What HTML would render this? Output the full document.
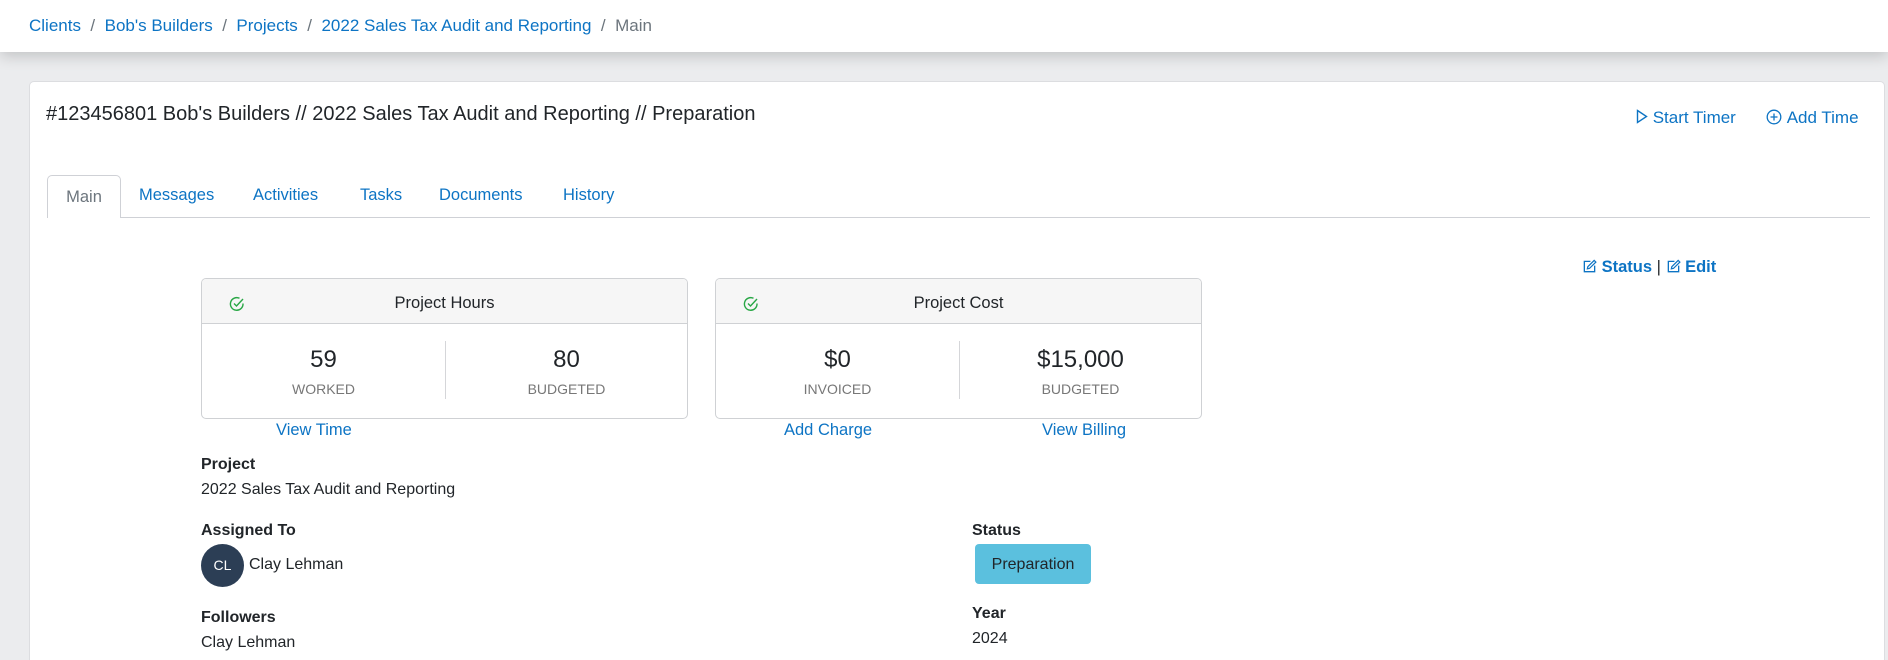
<!DOCTYPE html>
<html><head><meta charset="utf-8"><style>
*{box-sizing:border-box;margin:0;padding:0}
html,body{width:1888px;height:660px;overflow:hidden}
body{background:#ebecee;font-family:"Liberation Sans",sans-serif;color:#212529;font-size:16px;position:relative}
.a{position:absolute;white-space:nowrap}
.blue{color:#0d74c4}
.hdr{position:absolute;left:0;top:0;width:1888px;height:52px;background:#fff;box-shadow:0 4px 14px rgba(0,0,0,.18)}
.card{position:absolute;left:29px;top:81px;width:1856px;height:579px;background:#fff;border:1px solid #dcdde0;border-bottom:none;border-radius:5px 5px 0 0}
.box{position:absolute;top:278px;width:487px;height:141px;border:1px solid #cfd1d4;border-radius:5px;background:#fff;overflow:hidden}
.box .h{height:45px;background:#f6f6f6;border-bottom:1px solid #cfd1d4;text-align:center;line-height:48px;font-size:16.5px}
.box .ck{position:absolute;left:27px;top:17px}
.box .div{position:absolute;left:243px;top:62px;width:1px;height:58px;background:#d5d6d9}
.box .n{position:absolute;width:243px;text-align:center;top:67px;font-size:24px}
.box .l{position:absolute;width:243px;text-align:center;top:102px;font-size:14px;color:#777}
.b{font-weight:bold}
</style></head><body>
<div class="hdr"></div>
<div class="a" style="left:29px;top:16px;font-size:17px"><span class="blue">Clients</span> <span style="color:#6c757d">&nbsp;/&nbsp;</span> <span class="blue">Bob's Builders</span> <span style="color:#6c757d">&nbsp;/&nbsp;</span> <span class="blue">Projects</span> <span style="color:#6c757d">&nbsp;/&nbsp;</span> <span class="blue">2022 Sales Tax Audit and Reporting</span> <span style="color:#6c757d">&nbsp;/&nbsp; Main</span></div>
<div class="card"></div>
<div class="a" style="left:46px;top:103px;font-size:20px">#123456801 Bob's Builders // 2022 Sales Tax Audit and Reporting // Preparation</div>
<div class="a blue" style="left:1636px;top:108px;font-size:17px"><svg width="12" height="15" viewBox="0 0 12 15" style="vertical-align:-1px"><path d="M1.5 1.5 L10.5 7.5 L1.5 13.5 Z" fill="none" stroke="#0d74c4" stroke-width="1.4"/></svg>&nbsp;Start Timer</div>
<div class="a blue" style="left:1766px;top:108px;font-size:17px"><svg width="16" height="16" viewBox="0 0 16 16" style="vertical-align:-2px"><circle cx="8" cy="8" r="6.8" fill="none" stroke="#0d74c4" stroke-width="1.3"/><path d="M8 4.5v7M4.5 8h7" stroke="#0d74c4" stroke-width="1.3"/></svg>&nbsp;Add Time</div>
<div class="a" style="left:47px;top:217px;width:1823px;height:1px;background:#cfd1d6"></div>
<div class="a" style="left:47px;top:175px;width:74px;height:43px;background:#fff;border:1px solid #cfd1d6;border-bottom:none;border-radius:5px 5px 0 0;text-align:center;line-height:42px;color:#6c757d;font-size:16.5px">Main</div>
<div class="a blue" style="left:139px;top:186px;font-size:16.5px">Messages</div>
<div class="a blue" style="left:253px;top:186px;font-size:16.5px">Activities</div>
<div class="a blue" style="left:360px;top:186px;font-size:16.5px">Tasks</div>
<div class="a blue" style="left:439px;top:186px;font-size:16.5px">Documents</div>
<div class="a blue" style="left:563px;top:186px;font-size:16.5px">History</div>
<div class="a" style="left:1582px;top:258px;font-size:16.5px"><svg width="15" height="15" viewBox="0 0 16 16" style="vertical-align:-2px"><path d="M9 2.5H2.5v11h11V7" fill="none" stroke="#0d74c4" stroke-width="1.4"/><path d="M13 1.5l1.8 1.8L8 10l-2.3.5.5-2.3z" fill="none" stroke="#0d74c4" stroke-width="1.3"/></svg> <span class="blue b">Status</span> | <svg width="15" height="15" viewBox="0 0 16 16" style="vertical-align:-2px"><path d="M9 2.5H2.5v11h11V7" fill="none" stroke="#0d74c4" stroke-width="1.4"/><path d="M13 1.5l1.8 1.8L8 10l-2.3.5.5-2.3z" fill="none" stroke="#0d74c4" stroke-width="1.3"/></svg> <span class="blue b">Edit</span></div>

<div class="box" style="left:201px">
<svg class="ck" width="16" height="16" viewBox="0 0 16 16"><path d="M14 7.5A6.3 6.3 0 1 1 10.5 2.3" fill="none" stroke="#28a745" stroke-width="1.4"/><path d="M5 7.5l2.5 2.5L14 3" fill="none" stroke="#28a745" stroke-width="1.4"/></svg>
<div class="h">Project Hours</div><div class="div"></div>
<div class="n" style="left:0">59</div><div class="n" style="left:243px">80</div>
<div class="l" style="left:0">WORKED</div><div class="l" style="left:243px">BUDGETED</div></div>
<div class="box" style="left:715px">
<svg class="ck" width="16" height="16" viewBox="0 0 16 16"><path d="M14 7.5A6.3 6.3 0 1 1 10.5 2.3" fill="none" stroke="#28a745" stroke-width="1.4"/><path d="M5 7.5l2.5 2.5L14 3" fill="none" stroke="#28a745" stroke-width="1.4"/></svg>
<div class="h">Project Cost</div><div class="div"></div>
<div class="n" style="left:0">$0</div><div class="n" style="left:243px">$15,000</div>
<div class="l" style="left:0">INVOICED</div><div class="l" style="left:243px">BUDGETED</div></div>
<div class="a blue" style="left:276px;top:421px;font-size:16.5px">View Time</div>
<div class="a blue" style="left:784px;top:421px;font-size:16.5px">Add Charge</div>
<div class="a blue" style="left:1042px;top:421px;font-size:16.5px">View Billing</div>

<div class="a b" style="left:201px;top:456px">Project</div>
<div class="a" style="left:201px;top:481px">2022 Sales Tax Audit and Reporting</div>
<div class="a b" style="left:201px;top:522px">Assigned To</div>
<div class="a" style="left:201px;top:544px;width:43px;height:43px;border-radius:50%;background:#2c3e55;color:#fff;font-size:14px;text-align:center;line-height:43px">CL</div>
<div class="a" style="left:249px;top:556px">Clay Lehman</div>
<div class="a b" style="left:201px;top:609px">Followers</div>
<div class="a" style="left:201px;top:634px">Clay Lehman</div>
<div class="a b" style="left:972px;top:522px">Status</div>
<div class="a" style="left:975px;top:544px;width:116px;height:40px;background:#5bc0de;border-radius:4px;text-align:center;line-height:42px">Preparation</div>
<div class="a b" style="left:972px;top:605px">Year</div>
<div class="a" style="left:972px;top:630px">2024</div>
</body></html>
